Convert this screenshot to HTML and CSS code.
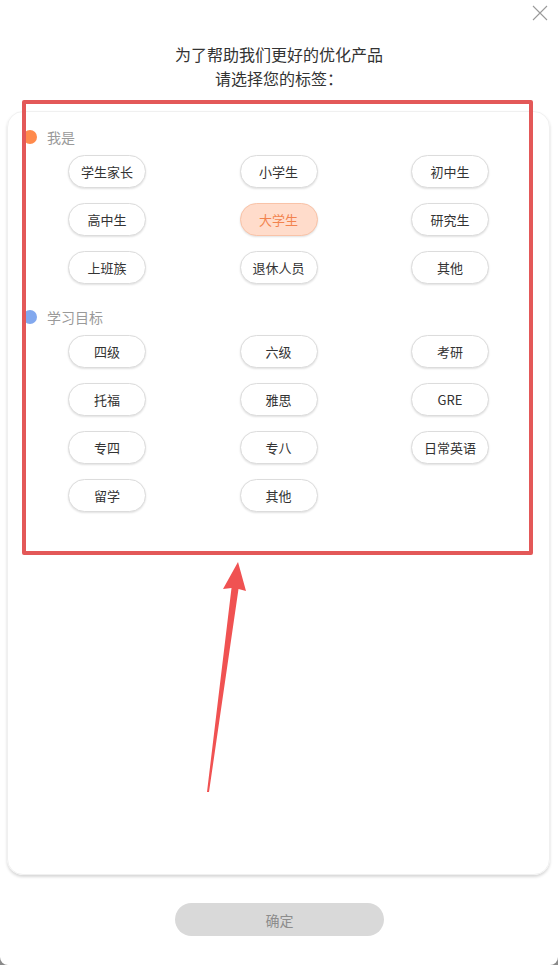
FILE: index.html
```html
<!DOCTYPE html>
<html lang="zh">
<head>
<meta charset="utf-8">
<link rel="stylesheet" href="styles.css">
</head>
<body>
<div class="dialog">
  <div class="topbar">
    <svg class="close" width="16" height="16" viewBox="0 0 16 16"><path d="M1 1L15 15M15 1L1 15" stroke="#9a9a9a" stroke-width="1.1" fill="none"/></svg>
  </div>
  <div class="title">为了帮助我们更好的优化产品<br>请选择您的标签：</div>
  <div class="card">
    <div class="section">
      <div class="sec-head"><span class="dot dot-orange"></span><span>我是</span></div>
      <div class="tags">
        <span class="tag">学生家长</span>
        <span class="tag">小学生</span>
        <span class="tag">初中生</span>
        <span class="tag">高中生</span>
        <span class="tag tag-on">大学生</span>
        <span class="tag">研究生</span>
        <span class="tag">上班族</span>
        <span class="tag">退休人员</span>
        <span class="tag">其他</span>
      </div>
    </div>
    <div class="section section-2">
      <div class="sec-head"><span class="dot dot-blue"></span><span>学习目标</span></div>
      <div class="tags">
        <span class="tag">四级</span>
        <span class="tag">六级</span>
        <span class="tag">考研</span>
        <span class="tag">托福</span>
        <span class="tag">雅思</span>
        <span class="tag">GRE</span>
        <span class="tag">专四</span>
        <span class="tag">专八</span>
        <span class="tag">日常英语</span>
        <span class="tag">留学</span>
        <span class="tag">其他</span>
      </div>
    </div>
  </div>
  <div class="footer">
    <button class="confirm">确定</button>
  </div>
  <div class="highlight"></div>
  <svg class="arrow" width="558" height="965" viewBox="0 0 558 965">
    <polygon points="238,562 246,591 238.5,589 209,792 207,792 231.5,588 223,589" fill="#f05252"/>
  </svg>
</div>
</body>
</html>
```

FILE: styles.css
```css
html, body {
  margin: 0;
  padding: 0;
  background: #8a8a8a;
}
body {
  font-family: "Noto Sans CJK SC", "Noto Sans", sans-serif;
  color: #333;
}
.dialog {
  position: relative;
  width: 558px;
  height: 965px;
  background: #fff;
  border-radius: 0 0 8px 8px;
  display: flex;
  flex-direction: column;
  overflow: hidden;
}
.topbar {
  height: 42px;
  display: flex;
  justify-content: flex-end;
  align-items: flex-start;
  padding: 5px 10px 0 0;
  box-sizing: border-box;
}
.close {
  display: block;
}
.title {
  text-align: center;
  font-size: 16px;
  line-height: 24px;
  color: #333;
  height: 69px;
}
.card {
  margin: 0 8px 0 7px;
  height: 764px;
  box-sizing: border-box;
  border-radius: 16px;
  border: 1px solid #f0f0f0;
  box-shadow: 0 2px 3px rgba(0, 0, 0, 0.16);
  padding: 15px 0 0 0;
}
.sec-head {
  display: flex;
  align-items: center;
  gap: 10px;
  height: 20px;
  padding-left: 15px;
  font-size: 14px;
  color: #9a9a9a;
}
.dot {
  width: 14px;
  height: 14px;
  border-radius: 50%;
}
.dot-orange { background: #ff8a4c; }
.dot-blue { background: #82a8ee; }
.tags {
  display: grid;
  grid-template-columns: repeat(3, 78px);
  justify-content: space-between;
  row-gap: 15px;
  padding: 8px 60px 0 60px;
}
.tag {
  height: 33px;
  box-sizing: border-box;
  border: 1px solid #dcdcdc;
  border-radius: 17px;
  box-shadow: 0 1px 2px rgba(0, 0, 0, 0.12);
  display: flex;
  align-items: center;
  justify-content: center;
  font-size: 13px;
  color: #333;
  background: #fff;
}
.tag-on {
  background: #ffdccb;
  border-color: #f9c3a8;
  color: #f2834e;
}
.section-2 {
  margin-top: 23px;
}
.footer {
  display: flex;
  justify-content: center;
  padding-top: 28px;
}
.confirm {
  width: 209px;
  height: 33px;
  margin-left: 1px;
  border: none;
  border-radius: 17px;
  background: #d9d9d9;
  color: #8c8c8c;
  font-family: "Noto Sans CJK SC", sans-serif;
  font-size: 14px;
  padding: 0;
}
.highlight {
  position: absolute;
  left: 22px;
  top: 100px;
  width: 511px;
  height: 455px;
  box-sizing: border-box;
  border: 4px solid #e35858;
  border-radius: 2px;
}
.arrow {
  position: absolute;
  left: 0;
  top: 0;
  pointer-events: none;
}
```
